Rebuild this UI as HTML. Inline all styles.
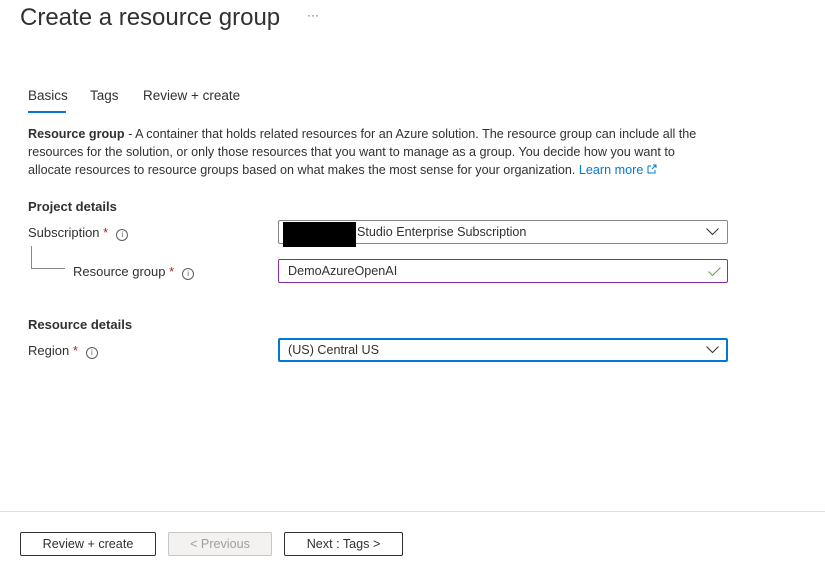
<!DOCTYPE html>
<html><head><style>
*{margin:0;padding:0;box-sizing:border-box}
body{width:825px;height:570px;background:#fff;font-family:"Liberation Sans",sans-serif;color:#323130;font-size:13px;position:relative;overflow:hidden}
.a{position:absolute;white-space:nowrap}
.title{left:20px;top:4px;font-size:24px;color:#323130}
.tab{top:88px;font-size:13.5px}
.desc{left:28px;top:125px;line-height:18px;font-size:12.6px}
.h{font-weight:bold;font-size:13px;color:#323130}
.req{color:#a4262c}
.info{display:inline-block;width:12px;height:12px;border:1px solid #605e5c;border-radius:50%;font-size:8px;line-height:10px;text-align:center;color:#605e5c;vertical-align:0px;margin-left:8px}
.box{position:absolute;left:278px;width:450px;height:24px;border:1px solid #8a8886;border-radius:2px;padding-left:9px;line-height:22px;font-size:12.6px}
.btn{position:absolute;top:532px;height:24px;border:1px solid #323130;border-radius:2px;text-align:center;line-height:22px;font-size:12.6px}
</style></head><body>
<div class="a title">Create a resource group</div>
<div class="a" style="left:307px;top:8px;color:#605e5c;font-size:12px">···</div>
<div class="a tab" style="left:28px;color:#323130">Basics</div>
<div class="a" style="left:28px;top:111px;width:38px;height:2px;background:#0078d4"></div>
<div class="a tab" style="left:90px">Tags</div>
<div class="a tab" style="left:143px">Review + create</div>
<div class="a desc"><b style="font-weight:600">Resource group</b> - A container that holds related resources for an Azure solution. The resource group can include all the<br>resources for the solution, or only those resources that you want to manage as a group. You decide how you want to<br>allocate resources to resource groups based on what makes the most sense for your organization. <span style="color:#0078d4">Learn more <svg width="10" height="10" viewBox="0 0 10 10" style="vertical-align:0"><path d="M1 2h3M1 2v7h7V6M5 5l4-4M6 1h3v3" fill="none" stroke="#0078d4" stroke-width="1"/></svg></span></div>
<div class="a h" style="left:28px;top:199px">Project details</div>
<div class="a" style="left:28px;top:225px">Subscription <span class="req">*</span><span class="info">i</span></div>
<div class="a" style="left:31px;top:246px;width:34px;height:23px;border-left:1px solid #8a8886;border-bottom:1px solid #8a8886"></div>
<div class="a" style="left:73px;top:264px">Resource group <span class="req">*</span><span class="info">i</span></div>
<div class="a h" style="left:28px;top:317px">Resource details</div>
<div class="a" style="left:28px;top:343px">Region <span class="req">*</span><span class="info">i</span></div>
<div class="box" style="top:220px"><span style="padding-left:69px">Studio Enterprise Subscription</span>
<svg style="position:absolute;right:8px;top:7px" width="13" height="8" viewBox="0 0 13 8"><path d="M0.5 0.5l6 6 6-6" fill="none" stroke="#323130"/></svg></div>
<div class="a" style="left:283px;top:222px;width:73px;height:25px;background:#000"></div>
<div class="box" style="top:259px;border-color:#8a2da5">DemoAzureOpenAI
<svg style="position:absolute;right:6px;top:7px" width="13" height="9" viewBox="0 0 13 9"><path d="M0.5 4.5l4 4 8-8" fill="none" stroke="#57a64a"/></svg></div>
<div class="box" style="top:338px;border:2px solid #0078d4;line-height:20px;padding-left:8px">(US) Central US
<svg style="position:absolute;right:7px;top:6px" width="13" height="8" viewBox="0 0 13 8"><path d="M0.5 0.5l6 6 6-6" fill="none" stroke="#323130"/></svg></div>
<div class="a" style="left:0;top:511px;width:825px;height:1px;background:#e1dfdd"></div>
<div class="btn" style="left:20px;width:136px">Review + create</div>
<div class="btn" style="left:168px;width:104px;background:#f3f2f1;border-color:#c8c6c4;color:#a19f9d">&lt; Previous</div>
<div class="btn" style="left:284px;width:119px">Next : Tags &gt;</div>
</body></html>
